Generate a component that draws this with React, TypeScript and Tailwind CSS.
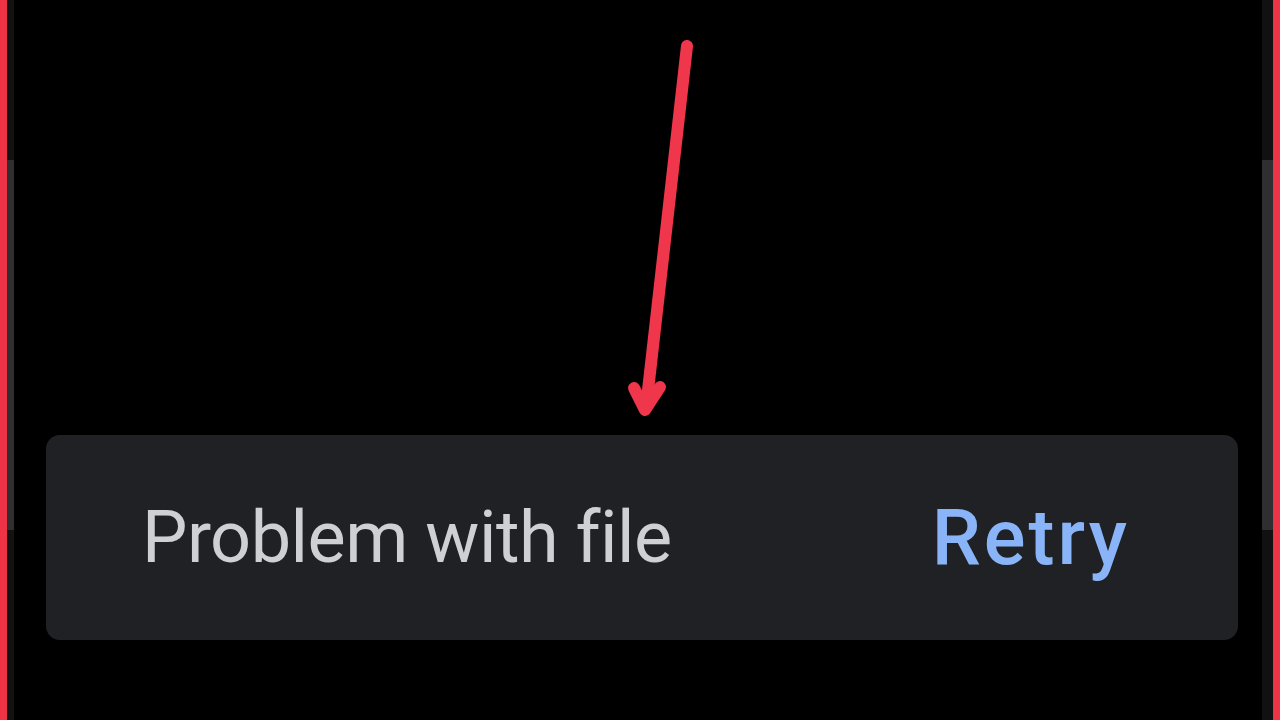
export default function App() {
  return (
    <div className="flex h-[720px] w-[1280px] bg-black overflow-hidden">
      {/* left frame */}
      <div className="w-[7px] bg-[#ee3347]" />
      <div className="flex w-[7px] flex-col bg-[#121212]">
        <div className="h-[160px]" />
        <div className="h-[370px] bg-[#2f2f31]" />
      </div>

      <div className="flex flex-1 flex-col">
        <svg width="1248" height="435" viewBox="0 0 1248 435" className="block">
          <path
            d="M673 46 L632 408"
            stroke="#f0364a"
            strokeWidth="12"
            strokeLinecap="round"
            fill="none"
          />
          <path
            d="M620 388 L631 410 L646 387"
            stroke="#f0364a"
            strokeWidth="12"
            strokeLinecap="round"
            strokeLinejoin="round"
            fill="none"
          />
        </svg>

        <div className="ml-[32px] mr-[24px] flex h-[205px] items-center justify-between rounded-[14px] bg-[#202124] pl-[96px] pr-[108px] font-['Roboto',sans-serif]">
          <span className="text-[72px] leading-none tracking-[-0.5px] text-[#cfd0d3]">Problem with file</span>
          <span className="text-[78px] font-medium leading-none tracking-[3px] text-[#8ab4f8]">Retry</span>
        </div>
      </div>

      {/* right frame */}
      <div className="flex w-[11px] flex-col bg-[#111111]">
        <div className="h-[160px]" />
        <div className="h-[370px] bg-[#2f2f31]" />
      </div>
      <div className="w-[7px] bg-[#ee3347]" />
    </div>
  );
}
